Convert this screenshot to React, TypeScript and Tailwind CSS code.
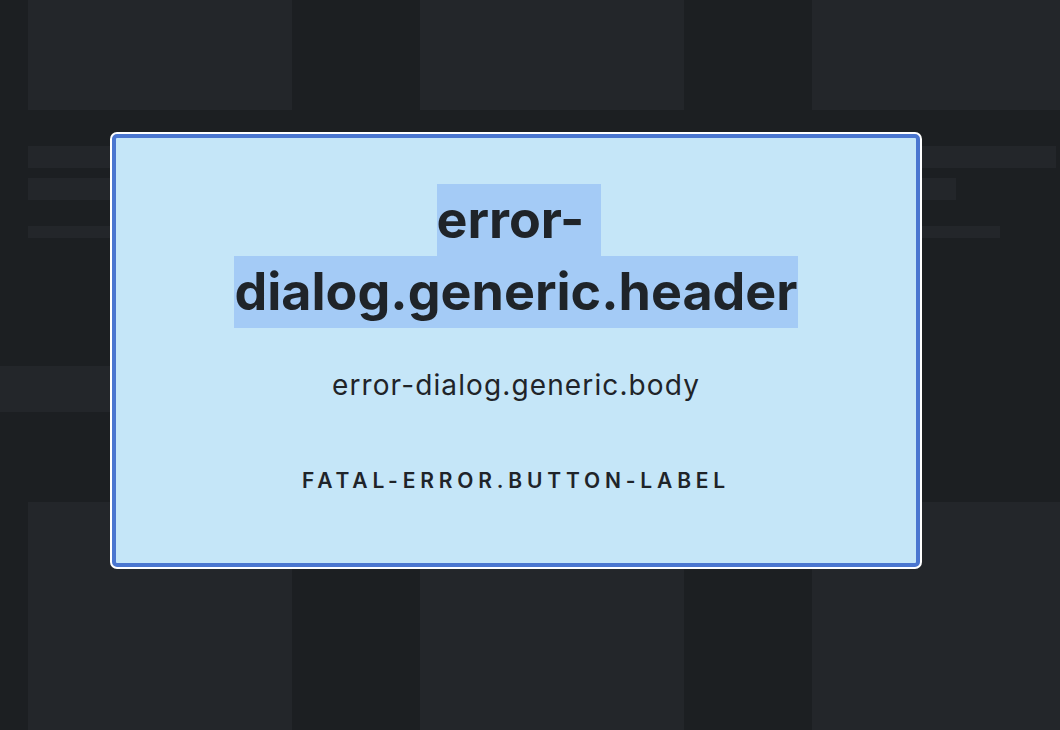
import React from "react";

const Block = ({ className }: { className: string }) => (
  <div className={`shrink-0 bg-[#23262a] ${className}`} />
);

const CardRow = ({ height }: { height: string }) => (
  <div className="flex gap-[128px] pl-[28px]">
    <Block className={`w-[264px] ${height}`} />
    <Block className={`w-[264px] ${height}`} />
    <Block className={`w-[264px] ${height}`} />
  </div>
);

const ErrorDialog = () => (
  <div className="absolute left-[110px] top-[132px] h-[437px] w-[812px] rounded-[7px] bg-white p-[2px]">
    <div className="flex h-full flex-col items-center rounded-[5px] border-4 border-[#4a76d0] bg-[#c5e6f8] pt-[46px] text-center text-[#1f2429] [font-family:Inter,'Noto_Sans',sans-serif]">
      <h1 className="text-[52px] font-bold leading-[72px]">
        <span className="relative left-[3px] mx-auto block w-fit bg-[#a4cbf6] pr-[17px]">
          error-
        </span>
        <span className="mx-auto block w-fit bg-[#a4cbf6]">
          dialog.generic.header
        </span>
      </h1>
      <p className="mt-[38px] text-[28px] leading-[39px] tracking-[0.04em]">
        error-dialog.generic.body
      </p>
      <button className="mt-[62px] text-[21px] font-semibold uppercase leading-[28px] tracking-[0.23em]">
        fatal-error.button-label
      </button>
    </div>
  </div>
);

export default function App() {
  return (
    <div className="relative h-[730px] w-[1060px] overflow-hidden bg-[#1c1f22]">
      <CardRow height="h-[110px]" />
      <Block className="ml-[28px] mt-[36px] h-[22px] w-[1028px]" />
      <Block className="ml-[28px] mt-[10px] h-[22px] w-[928px]" />
      <Block className="ml-[28px] mt-[26px] h-[12px] w-[972px]" />
      <Block className="mt-[128px] h-[46px] w-[520px]" />
      <div className="mt-[90px]">
        <CardRow height="h-[228px]" />
      </div>
      <ErrorDialog />
    </div>
  );
}
